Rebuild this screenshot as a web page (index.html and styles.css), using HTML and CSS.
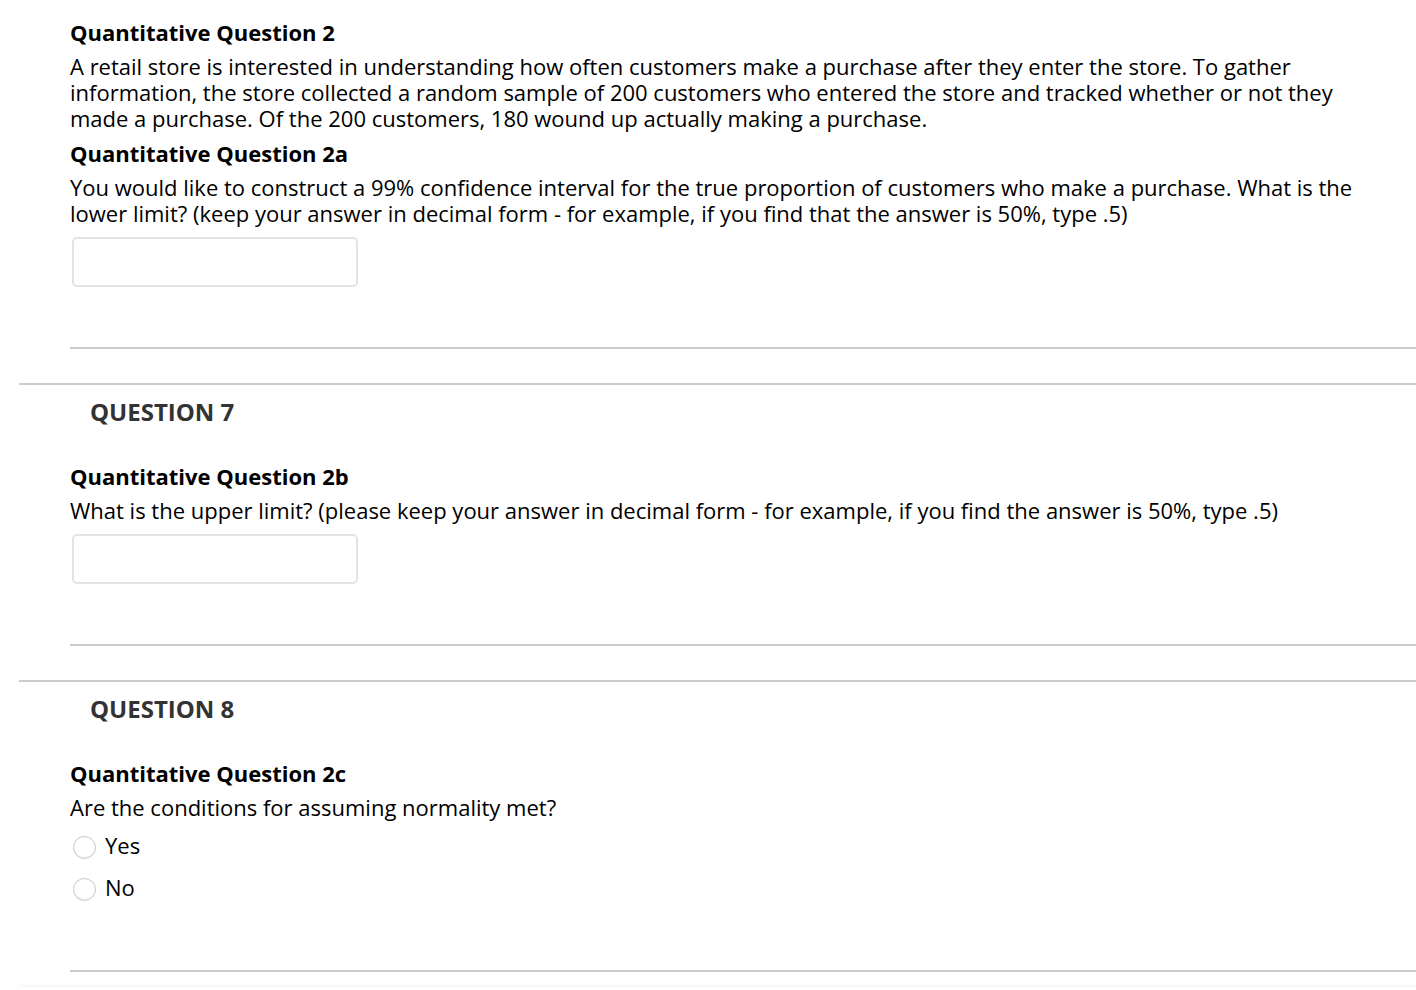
FILE: index.html
```html
<!DOCTYPE html>
<html>
<head>
<meta charset="utf-8">
<link rel="stylesheet" href="styles.css">
</head>
<body>
<div class="page">
  <div class="block first">
    <div class="body">
      <h3 class="qtitle">Quantitative Question 2</h3>
      <p class="qtext">A retail store is interested in understanding how often customers make a purchase after they enter the store. To gather information, the store collected a random sample of 200 customers who entered the store and tracked whether or not they made a purchase. Of the 200 customers, 180 wound up actually making a purchase.</p>
      <h3 class="qtitle sub">Quantitative Question 2a</h3>
      <p class="qtext">You would like to construct a 99% confidence interval for the true proportion of customers who make a purchase. What is the lower limit? (keep your answer in decimal form - for example, if you find that the answer is 50%, type .5)</p>
      <input class="answer" type="text">
    </div>
  </div>

  <div class="block">
    <div class="qhead">QUESTION 7</div>
    <div class="body">
      <h3 class="qtitle">Quantitative Question 2b</h3>
      <p class="qtext">What is the upper limit? (please keep your answer in decimal form - for example, if you find the answer is 50%, type .5)</p>
      <input class="answer" type="text">
    </div>
  </div>

  <div class="block">
    <div class="qhead">QUESTION 8</div>
    <div class="body radio-body">
      <h3 class="qtitle">Quantitative Question 2c</h3>
      <p class="qtext">Are the conditions for assuming normality met?</p>
      <div class="options">
        <label class="opt"><span class="radio"></span><span>Yes</span></label>
        <label class="opt"><span class="radio"></span><span>No</span></label>
      </div>
    </div>
  </div>

  <div class="block next"></div>
</div>
</body>
</html>
```

FILE: styles.css
```css
html, body {
  margin: 0;
  padding: 0;
  background: #fff;
}
body {
  font-family: "Open Sans", "Liberation Sans", sans-serif;
  color: #000;
  overflow: hidden;
}
.page {
  padding-left: 19px;
}
.block {
  border-top: 2px solid #cccccc;
  margin-top: 34px;
}
.block.first {
  border-top: none;
  margin-top: 0;
  padding-top: 19px;
}
.qhead {
  font-size: 24px;
  font-weight: 700;
  line-height: 30px;
  color: #333;
  padding: 12px 0 0 71px;
}
.body {
  margin-left: 51px;
  padding-bottom: 60px;
  border-bottom: 2px solid #cccccc;
}
.block:not(.first) .body {
  margin-top: 36px;
}
.qtitle {
  margin: 0;
  font-size: 22px;
  font-weight: 700;
  line-height: 26px;
}
.qtitle.sub {
  margin-top: 9px;
}
.qtext {
  margin: 8px 0 0 0;
  font-size: 22px;
  line-height: 26px;
  padding-right: 50px;
}
.answer {
  display: block;
  margin: 11px 0 0 2px;
  width: 286px;
  height: 50px;
  box-sizing: border-box;
  border: 2px solid #e3e3e3;
  border-radius: 5px;
  background: #fff;
  outline: none;
}
.options {
  margin-top: 11px;
  display: flex;
  flex-direction: column;
  gap: 14px;
}
.opt {
  display: flex;
  align-items: center;
  gap: 9px;
  font-size: 22px;
  line-height: 26px;
}
.radio {
  width: 21px;
  height: 21px;
  border-radius: 50%;
  border: 1px solid #c8c8c8;
  margin-left: 3px;
  margin-top: 5px;
  background: #fff;
  box-shadow: inset 0 -1px 1px rgba(0,0,0,0.08);
}
.radio-body {
  padding-bottom: 69px;
}
.block.next {
  border-top: none;
  margin-top: 15px;
  height: 20px;
  box-shadow: 0 -1px 4px rgba(0,0,0,0.06);
}
```
